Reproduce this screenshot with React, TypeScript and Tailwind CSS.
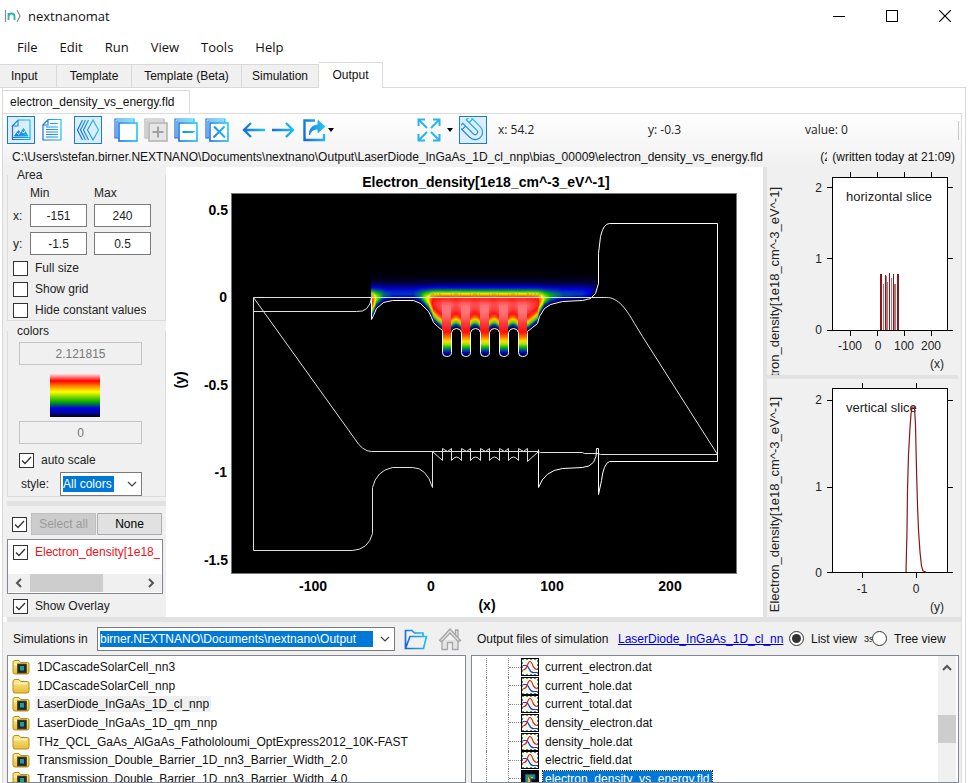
import React from 'react';

const BLUE = 'url(#toolBlue)';

type Point = [number, number];

/* ---------- band diagram ---------- */

const wells: Point[] = [[442, 451], [461, 470], [480, 489], [499, 508], [518, 527]];

const bandLeft: Point[] = [
  [371, 319], [373, 315], [376, 308], [383, 302], [392, 300], [413, 300], [420, 303],
  [428, 311], [431, 317], [433, 322], [437, 326], [442, 330],
];
const bandRight: Point[] = [
  [527, 331], [532, 327], [537, 323], [539, 316], [544, 308], [550, 304], [562, 301],
  [582, 300], [590, 298], [595, 293], [598, 283],
];

const lerpPoints = (pts: Point[], x: number) => {
  for (let i = 1; i < pts.length; i++) {
    const [x0, y0] = pts[i - 1];
    const [x1, y1] = pts[i];
    if (x <= x1) return y0 + ((y1 - y0) * (x - x0)) / (x1 - x0);
  }
  return pts[pts.length - 1][1];
};

const inWell = (x: number) => wells.some(([a, b]) => x >= a && x < b);

const bandEdge = (x: number) => {
  if (x < 442) return lerpPoints(bandLeft, x);
  if (x > 527) return lerpPoints(bandRight, x);
  const well = wells.find(([a, b]) => x >= a && x < b);
  if (well) {
    const t = Math.abs(x + 0.5 - (well[0] + well[1]) / 2);
    return t > 4 ? 353 : 356;
  }
  const left = wells.filter(([, b]) => b <= x).pop();
  const mid = (left ? left[1] : 451) + 5;
  return 328 + Math.pow(Math.abs(x + 0.5 - mid) / 5, 2) * 3;
};

const scale: [number, number, number, number][] = [
  [0, 0, 0, 0], [0.06, 0, 0, 60], [0.2, 0, 0, 235], [0.3, 0, 100, 140], [0.38, 0, 190, 0],
  [0.54, 250, 250, 0], [0.64, 255, 130, 0], [0.74, 250, 10, 10], [0.84, 252, 60, 60],
  [0.93, 255, 135, 140], [1, 255, 185, 185],
];

const colorOf = (v: number) => {
  for (let i = 1; i < scale.length; i++) {
    if (v <= scale[i][0]) {
      const a = scale[i - 1];
      const b = scale[i];
      const t = (v - a[0]) / (b[0] - a[0]);
      return `rgb(${[1, 2, 3].map((k) => Math.round(a[k] + (b[k] - a[k]) * t)).join(',')})`;
    }
  }
  return 'rgb(255,185,185)';
};

const TOP = 267;
const columns = Array.from({ length: 227 }, (_, i) => {
  const x = 371 + i;
  const edge = bandEdge(x);
  const height = edge - TOP;
  const steps = Math.ceil(height / 3);
  const stops = Array.from({ length: steps + 1 }, (_, k) => {
    const y = TOP + (height * k) / steps;
    const fermi = 1 / (1 + Math.exp((293 - y) / 4));
    const filled = 1 - Math.exp(-(edge - y) / (inWell(x) ? 18 : 10));
    return { offset: k / steps, color: colorOf(filled * fermi) };
  });
  return { x, height, stops };
});

const toPath = (pts: Point[]) => 'M' + pts.map((p) => p.join(' ')).join('L');

const wellPath = wells
  .map(([a, b], i) => {
    const arch = i < 4 ? `Q${b + 1} 328 ${b + 5} 328Q${b + 9} 328 ${wells[i + 1][0]} 332` : '';
    return `L${a} 352Q${a} 356 ${a + 4} 356Q${b} 356 ${b} 352L${b} 332${arch}`;
  })
  .join('');

const conduction =
  toPath([[371, 297], ...bandLeft]) + wellPath + 'L' + bandRight.map((p) => p.join(' ')).join('L') +
  'L598 253L600 236Q603 223 609 223L717 223L717 461L609 461Q603 463 601 480L598 494L598 448L596 448' +
  'Q597 466 582 467L562 468Q544 470 538 487L538 449';

const valence =
  'M538 451L527 461' +
  [...wells]
    .reverse()
    .map(([a, b], i) => `L${b} 448L${b - 4} 451L${a} 448L${a} 460${i < 4 ? `Q${a - 5} 453 ${a - 10} 460` : ''}`)
    .join('') +
  'L432 451L432 487Q426 467 412 467L392 467Q376 470 372 487L372 533Q368 549 352 550L253 550L253 297';

const DensityChart: React.FC = () => (
  <svg viewBox="166 167 597 450" className="block w-full h-full" role="img" aria-label="Electron density">
    <rect x="231.500" y="193.500" width="505" height="380" fill="#000" stroke="#777" />
    <defs>
      {columns.map((c) => (
        <linearGradient key={c.x} id={`col${c.x}`} x1="0" y1="0" x2="0" y2="1">
          {c.stops.map((s) => (
            <stop key={s.offset} offset={s.offset} stopColor={s.color} />
          ))}
        </linearGradient>
      ))}
    </defs>
    <g shapeRendering="crispEdges">
      {columns.map((c) => (
        <rect key={c.x} x={c.x} y={TOP} width="1" height={c.height} fill={`url(#col${c.x})`} />
      ))}
    </g>
    <g fill="none" stroke="#e0e0e0" transform="translate(0.5 0.5)">
      <path d={conduction} stroke="#fff" />
      <path d={valence} />
      <path d="M253 311H356Q369 312 371 297" />
      <path d="M253 297H606C618 297 626 309 634 323L642 336L717 454" />
      <path d="M253 297L354 438Q362 451 371 451H538L540 452L582 452L584 453L598 453L600 454H717" />
    </g>
    <g className="font-['Liberation_Sans',sans-serif] font-bold" fontSize="14" fill="#000">
      <text x="486" y="187" textAnchor="middle">Electron_density[1e18_cm^-3_eV^-1]</text>
      <g textAnchor="end">
        <text x="228" y="215">0.5</text>
        <text x="227" y="302">0</text>
        <text x="228" y="390">-0.5</text>
        <text x="227" y="477">-1</text>
        <text x="228" y="565">-1.5</text>
      </g>
      <g textAnchor="middle">
        <text x="313" y="591">-100</text>
        <text x="431" y="591">0</text>
        <text x="552" y="591">100</text>
        <text x="670" y="591">200</text>
        <text x="487" y="610">(x)</text>
        <text transform="translate(185 380) rotate(-90)">(y)</text>
      </g>
    </g>
  </svg>
);

/* ---------- slices ---------- */

const sliceFont = "font-['Liberation_Sans',sans-serif] block w-full";
const sliceLabel = 'Electron_density[1e18_cm^-3_eV^-1]';

const HorizontalSlice: React.FC = () => (
  <svg viewBox="767 167 191 208" className={sliceFont} fontSize="12" fill="#222">
    <rect x="832.500" y="177.500" width="115" height="153" fill="#fff" stroke="#000" />
    <path
      d="M827 187.5h5M827 258.5h5M827 330.5h5M948 187.5h5M948 258.5h5M948 330.5h5M850.5 172v5M877.5 172v5M904.5 172v5M931.5 172v5M850.5 331v5M877.5 331v5M904.5 331v5M931.5 331v5"
      stroke="#000"
    />
    <g textAnchor="end">
      <text x="822" y="192">2</text>
      <text x="822" y="263">1</text>
      <text x="822" y="334">0</text>
    </g>
    <g textAnchor="middle">
      <text x="850" y="350">-100</text>
      <text x="878" y="350">0</text>
      <text x="904" y="350">100</text>
      <text x="931" y="350">200</text>
      <text x="937" y="368">(x)</text>
    </g>
    <g stroke="#8b1518">
      <path d="M880.5 274V330M881.5 274V330M885.5 275V330M889.5 273V330M893.5 274V330M897.5 274V330M898.5 274V330" />
      <path d="M883.5 284V330M887.5 282V330M891.5 278V330M895.5 284V330M886.5 276V330M894.5 284V330" strokeOpacity="0.6" />
    </g>
    <text x="846" y="201" fontSize="13">horizontal slice</text>
    <text transform="translate(779 187) rotate(-90)" textAnchor="end" fontSize="13">{sliceLabel}</text>
  </svg>
);

const VerticalSlice: React.FC = () => (
  <svg viewBox="767 379 191 237" className={sliceFont} fontSize="12" fill="#222">
    <rect x="832.500" y="388.500" width="115" height="184" fill="#fff" stroke="#000" />
    <path
      d="M827 400.5h5M827 487.5h5M827 572.5h5M948 400.5h5M948 487.5h5M948 572.5h5M862.5 383v5M916.5 383v5M862.5 573v5M916.5 573v5"
      stroke="#000"
    />
    <g textAnchor="end">
      <text x="822" y="404">2</text>
      <text x="822" y="491">1</text>
      <text x="822" y="577">0</text>
    </g>
    <g textAnchor="middle">
      <text x="862" y="593">-1</text>
      <text x="916" y="593">0</text>
      <text x="937" y="611">(y)</text>
    </g>
    <text x="846" y="412" fontSize="13">vertical slice</text>
    <path
      d="M906 572L907 530L907.500 490L908.500 455L910 428L911 414L912 407H914.500L915.500 425L916.500 470L917.500 505L918.500 530L920 552L921.500 566L923 571L926 572"
      fill="none"
      stroke="#8b1518"
      strokeWidth="1.2"
    />
    <text transform="translate(779 397) rotate(-90)" textAnchor="end" fontSize="13">{sliceLabel}</text>
  </svg>
);

/* ---------- small controls ---------- */

const Check: React.FC<{ label?: string; name: string; checked?: boolean; className?: string }> = ({ label, name, checked, className }) => (
  <label className={`flex items-center gap-[7px] whitespace-nowrap ${className ?? ''}`}>
    <span className="grid shrink-0">
      <input
        type="checkbox"
        defaultChecked={checked}
        aria-label={label ? undefined : name}
        className="peer col-start-1 row-start-1 appearance-none size-[15px] bg-white border border-[#333]"
      />
      <svg viewBox="0 0 15 15" className="col-start-1 row-start-1 size-[15px] invisible peer-checked:visible pointer-events-none">
        <path d="M3 7.500L6 10.500L12 4" fill="none" stroke="#333" strokeWidth="1.3" />
      </svg>
    </span>
    {label && <span className="min-w-0 overflow-hidden">{label}</span>}
  </label>
);

const Chevron: React.FC<{ d?: string; className?: string }> = ({ d = 'M1 3L5 7L9 3', className }) => (
  <svg viewBox="0 0 10 10" className={`size-[10px] shrink-0 ${className ?? ''}`}>
    <path d={d} fill="none" stroke="#444" strokeWidth="1.2" />
  </svg>
);

const BoldChevron: React.FC<{ d: string; className?: string }> = ({ d, className }) => (
  <svg viewBox="0 0 10 10" className={`size-[10px] shrink-0 ${className ?? ''}`}>
    <path d={d} fill="none" stroke="#555" strokeWidth="2" />
  </svg>
);

const numberBox = 'w-[57px] h-[23px] bg-white border border-[#7a7a7a] text-center text-[#222] outline-none';

/* ---------- toolbar ---------- */

const Separator = () => <span className="w-px h-[19px] bg-[#c8c8c8] shrink-0" />;

const ToolButton: React.FC<{ label: string; active?: boolean; className?: string; children: React.ReactNode }> = ({ label, active, className, children }) => (
  <button
    aria-label={label}
    className={`h-[28px] flex items-center justify-center shrink-0 ${active ? 'w-[28px] border border-[#1a7ad4] bg-[#dceefb]' : 'w-[24px]'} ${className ?? ''}`}
  >
    <svg viewBox="0 0 24 24" className="size-6 shrink-0" fill="none" stroke={BLUE} strokeWidth="1.6">
      {children}
    </svg>
  </button>
);

const stack = 'M4.500 20H1V1H20V4.500M3 20.500V3H20.500';

const Caret = () => (
  <svg viewBox="0 0 6 4" className="w-[6px] h-[4px] shrink-0">
    <path d="M0 0H6L3 4Z" fill="#000" />
  </svg>
);

const Toolbar: React.FC = () => (
  <div className="flex items-center h-[33px] pl-[4px] pr-[2px] border-t border-[#dcdcdc]">
    <ToolButton label="Show chart" active>
      <path d="M3.500 8V21.500H21V2H9L3.500 8H9V2" strokeWidth="1.2" />
      <path d="M3.500 19.500H21" strokeWidth="1" />
      <path d="M5.500 18L9.500 12.500L11.500 15L14.500 10.500L19 18Z" fill={BLUE} strokeWidth="1" />
      <path d="M8 15L9.500 16.500L11 14.500M13 13.500L14.500 15L16 13" stroke="#fff" strokeWidth="1" />
    </ToolButton>
    <ToolButton label="Show text" className="ml-[5px]">
      <path d="M3 7V22H21V1.500H8L3 7H8V1.500M10 5.500H18M6 9H18M6 11.500H18M6 14H18M6 16.500H18M6 19H18" strokeWidth="1.2" />
    </ToolButton>
    <span className="ml-[6px]"><Separator /></span>
    <ToolButton label="Layers" active className="ml-[4px]">
      <path d="M11.500 12L17 2L22.500 12L17 22ZM12.500 2L7.500 12L12.500 22M9.500 2L4.500 12L9.500 22M6.500 2L1.500 12L6.500 22" strokeWidth="1.2" />
    </ToolButton>
    <span className="ml-[6px]"><Separator /></span>
    <ToolButton label="Single overlay" className="ml-[6px]">
      <path d={stack} strokeWidth="1.2" />
      <rect x="5" y="5" width="18" height="18" fill="#fff" />
    </ToolButton>
    <ToolButton label="Add overlay" className="ml-[6px]">
      <path d={stack} stroke="#b4b4b4" strokeWidth="1.2" />
      <rect x="5" y="5" width="18" height="18" fill="#e6e6e6" stroke="#b4b4b4" />
      <path d="M14 8.500V19.500M8.500 14H19.500" stroke="#a0a0a0" strokeWidth="2" />
    </ToolButton>
    <ToolButton label="Remove overlay" className="ml-[6px]">
      <path d={stack} strokeWidth="1.2" />
      <rect x="5" y="5" width="18" height="18" fill="#fff" />
      <path d="M8.500 14H19.500V14.010" strokeWidth="2" />
    </ToolButton>
    <ToolButton label="Clear overlays" className="ml-[7px]">
      <path d={stack} strokeWidth="1.2" />
      <rect x="5" y="5" width="18" height="18" fill="#fff" />
      <path d="M9 8.500L20 19.500M19.500 8.500L8.500 19.500" strokeWidth="2" />
    </ToolButton>
    <span className="ml-[7px]"><Separator /></span>
    <ToolButton label="Back" className="ml-[6px]">
      <path d="M23 12.010H2L23 12M9 5L2 12L9 19" strokeWidth="2.4" />
    </ToolButton>
    <ToolButton label="Forward" className="ml-[5px]">
      <path d="M1 12.010H22L1 12M15 5L22 12L15 19" strokeWidth="2.4" />
    </ToolButton>
    <ToolButton label="Export" className="ml-[7px]">
      <path d="M13 2.500H2.500V22H22V16" strokeWidth="2.400" />
      <path d="M7.500 17C7 10.500 11 7 16 7V2.500L23 8.500L16 14.500V11C12 11 9 12.500 7.500 17Z" fill={BLUE} strokeWidth="1" />
    </ToolButton>
    <span className="ml-[2px]"><Caret /></span>
    <ToolButton label="Zoom to fit" className="ml-[83px]">
      <path d="M1.500 8V1.500H8M16 1.500H22.500V8M22.500 16V22.500H16M8 22.500H1.500V16M2 2L10 10M22 2L14 10M22 22L14 14M2 22L10 14" stroke="#28b4f0" strokeWidth="2" />
    </ToolButton>
    <span className="ml-[6px]"><Caret /></span>
    <ToolButton label="Snap" active className="ml-[6px]">
      <g transform="rotate(-45 12 12)" strokeWidth="1.2" strokeLinejoin="round">
        <path d="M4.500 0V15A7.500 7.500 0 0 0 19.500 15V0H14.500V15A2.500 2.500 0 0 1 9.500 15V0Z" />
        <path d="M4.500 4H9.500M14.500 4H19.500" />
      </g>
    </ToolButton>
    <div className="flex-1 flex items-center ml-[11px] text-[#222] font-['Open_Sans',sans-serif]">
      <span className="w-[150px]">x: 54.2</span>
      <span className="w-[157px]">y: -0.3</span>
      <span>value: 0</span>
    </div>
    <Separator />
  </div>
);

/* ---------- lists ---------- */

const FolderIcon: React.FC<{ marked?: boolean }> = ({ marked }) => (
  <svg viewBox="0 0 18 16" className="w-[18px] h-[16px] shrink-0">
    <path d="M1 3.500Q1 1.500 3 1.500H7L8.500 3.500H15.500Q17 3.500 17 5V13Q17 15 15 15H3Q1 15 1 13Z" fill="url(#folder)" stroke="#b98a1c" />
    <path d="M2 5.500H15" stroke="#fff6c0" strokeWidth="1.4" />
    {marked && (
      <>
        <rect x="5.500" y="5" width="9" height="9" fill="#1b2a38" stroke="#5d4810" strokeWidth="0.800" />
        <rect x="8" y="7" width="4" height="4.500" fill="#2c9a88" />
      </>
    )}
  </svg>
);

const DataIcon = () => (
  <svg viewBox="0 0 18 18" className="size-[18px] shrink-0">
    <rect x="0.500" y="0.500" width="17" height="17" fill="#eefce8" stroke="#000" />
    <path d="M1.500 1.500H16.500V16.500H1.500Z" fill="none" stroke="#000" strokeDasharray="1 3" />
    <path d="M1.500 7.500H5Q7 8 8.500 11.500T13 14.500H16.500" fill="none" stroke="#2233dd" strokeWidth="1.200" />
    <path d="M1.500 12Q4.500 12 6 8.500Q7.500 3.500 9 3.500Q10.500 3.500 12 8Q13.500 11.500 16.500 11.500" fill="none" stroke="#e02020" strokeWidth="1.200" />
  </svg>
);

const FieldIcon = () => (
  <svg viewBox="0 0 18 18" className="size-[18px] shrink-0">
    <rect width="18" height="18" fill="#05080f" />
    <path d="M4.500 14V4.500H14V9H10V14Z" fill="#1d9b5a" stroke="#1c4fb0" />
    <path d="M7 12V7H12V8H9V12Z" fill="#d6c832" />
    <rect x="8" y="7" width="2" height="2" fill="#d8401c" />
  </svg>
);

const simulations = [
  { name: '1DCascadeSolarCell_nn3', marked: true },
  { name: '1DCascadeSolarCell_nnp' },
  { name: 'LaserDiode_InGaAs_1D_cl_nnp', marked: true, current: true },
  { name: 'LaserDiode_InGaAs_1D_qm_nnp', marked: true },
  { name: 'THz_QCL_GaAs_AlGaAs_Fathololoumi_OptExpress2012_10K-FAST' },
  { name: 'Transmission_Double_Barrier_1D_nn3_Barrier_Width_2.0', marked: true },
  { name: 'Transmission_Double_Barrier_1D_nn3_Barrier_Width_4.0', marked: true },
];

const files = [
  'current_electron.dat',
  'current_hole.dat',
  'current_total.dat',
  'density_electron.dat',
  'density_hole.dat',
  'electric_field.dat',
  'electron_density_vs_energy.fld',
];

const tabs = [
  { name: 'Input', width: 'w-[57px]' },
  { name: 'Template', width: 'w-[75px]' },
  { name: 'Template (Beta)', width: 'w-[110px]' },
  { name: 'Simulation', width: 'w-[77px]' },
];

const Radio: React.FC<{ label: string; checked?: boolean }> = ({ label, checked }) => (
  <label className="flex items-center gap-[7px] whitespace-nowrap">
    <span className="grid place-items-center">
      <input
        type="radio"
        name="view"
        defaultChecked={checked}
        className="peer col-start-1 row-start-1 appearance-none size-[15px] rounded-full border border-[#333] bg-white"
      />
      <span className="col-start-1 row-start-1 size-[9px] rounded-full bg-[#333] invisible peer-checked:visible pointer-events-none" />
    </span>
    {label}
  </label>
);

const App: React.FC = () => {
  return (
    <div className="w-full h-screen overflow-hidden flex flex-col bg-white font-['Liberation_Sans',sans-serif] text-[12px] leading-4 text-[#111]">
      <svg className="absolute size-0" aria-hidden="true">
        <defs>
          <linearGradient id="toolBlue" gradientUnits="userSpaceOnUse" x1="0" y1="14" x2="24" y2="8">
            <stop offset="0" stopColor="#1866dc" />
            <stop offset="1" stopColor="#22cdf2" />
          </linearGradient>
          <linearGradient id="folder" x1="0" y1="0" x2="0" y2="1">
            <stop offset="0" stopColor="#fdeb8c" />
            <stop offset="1" stopColor="#e9bb3a" />
          </linearGradient>
        </defs>
      </svg>

      {/* Title bar */}
      <header className="flex items-center h-8 pl-[4px] font-['Open_Sans',sans-serif] text-[13px]">
        <svg viewBox="0 0 18 16" className="w-[18px] h-[16px]" fill="none">
          <path d="M1.500 2V14M13 2L16 8L13 14" stroke="#8a8a8a" strokeWidth="1.2" />
          <path d="M4.500 12V5M4.500 8Q5 5.500 7.500 5.500T10.500 8V12" stroke="#2bb3ac" strokeWidth="1.8" />
        </svg>
        <h1 className="ml-[6px] flex-1">nextnanomat</h1>
        <div className="flex items-center gap-[41px] pr-[17px]">
          <button aria-label="Minimize"><svg viewBox="0 0 12 12" className="size-3"><path d="M0 6.500H12" stroke="#000" /></svg></button>
          <button aria-label="Maximize"><svg viewBox="0 0 12 12" className="size-3"><rect x="0.500" y="0.500" width="11" height="11" fill="none" stroke="#000" /></svg></button>
          <button aria-label="Close"><svg viewBox="0 0 12 12" className="size-3"><path d="M0 0L12 12M12 0L0 12" stroke="#000" strokeWidth="1.2" /></svg></button>
        </div>
      </header>

      {/* Menu */}
      <nav className="flex items-center h-[30px] pl-[17px] gap-[22px] font-['Open_Sans',sans-serif] text-[13px]">
        <button>File</button>
        <button>Edit</button>
        <button>Run</button>
        <button>View</button>
        <button>Tools</button>
        <button>Help</button>
      </nav>

      {/* Main tabs */}
      <div role="tablist" className="flex items-end h-[26px] shrink-0">
        {tabs.map((t) => (
          <button
            key={t.name}
            role="tab"
            className={`${t.width} h-6 bg-[#f0f0f0] border border-l-0 border-[#d9d9d9] ${t.name === 'Input' ? 'text-left pl-[11px]' : ''}`}
          >
            {t.name}
          </button>
        ))}
        <button role="tab" aria-selected="true" className="w-[64px] h-[26px] pb-[2px] bg-white border border-b-0 border-l-0 border-[#d9d9d9]">Output</button>
        <div className="flex-1 border-b border-[#d9d9d9] mr-[2px]" />
      </div>

      <div className="flex-1 min-h-0 flex flex-col ml-[2px] mr-[2px] pr-[3px] border-x border-[#d9d9d9]">
        <div className="flex items-end h-[25px] shrink-0">
          <button role="tab" aria-selected="true" className="w-[187px] h-[23px] pl-[7px] text-left border border-l-0 border-b-0 border-[#dcdcdc]">
            electron_density_vs_energy.fld
          </button>
        </div>

        <div className="flex-1 min-h-0 flex flex-col border-r border-[#dcdcdc]">
          <div className="bg-gradient-to-b from-white to-[#f0f0f0] shrink-0">
            <Toolbar />
            <div className="flex items-center h-[21px] pl-[9px] pr-[6px] whitespace-nowrap">
              <span>C:\Users\stefan.birner.NEXTNANO\Documents\nextnano\Output\LaserDiode_InGaAs_1D_cl_nnp\bias_00009\electron_density_vs_energy.fld</span>
              <span className="ml-auto w-[7px] overflow-hidden">(2</span>
              <span className="ml-[5px]">(written today at 21:09)</span>
            </div>
          </div>

          <div className="flex h-[450px] shrink-0 bg-white">
            {/* Left panel */}
            <aside className="w-[163px] shrink-0 pl-[4px] bg-[#f0f0f0] text-[#222] flex flex-col">
              <fieldset className="h-[154px] border border-t-0 border-[#dcdcdc] px-[5px]">
                <legend className="px-[4px] h-4 leading-4">Area</legend>
                <div className="grid grid-cols-[17px_64px_57px] gap-y-[5px] items-center">
                  <span />
                  <span className="h-4 leading-5">Min</span>
                  <span className="h-4 leading-5">Max</span>
                  <label htmlFor="xmin">x:</label>
                  <input id="xmin" className={numberBox} defaultValue="-151" />
                  <input aria-label="x max" className={numberBox} defaultValue="240" />
                  <label htmlFor="ymin">y:</label>
                  <input id="ymin" className={numberBox} defaultValue="-1.5" />
                  <input aria-label="y max" className={numberBox} defaultValue="0.5" />
                </div>
                <div className="flex flex-col gap-[5px] mt-[5px]">
                  <Check name="full" label="Full size" />
                  <Check name="grid" label="Show grid" />
                  <Check name="hide" label="Hide constant values" />
                </div>
              </fieldset>
              <fieldset className="h-[174px] border border-t-0 border-[#dcdcdc] pl-[11px] mt-[2px]">
                <legend className="px-[1px] h-4 leading-4 -ml-[3px]">colors</legend>
                <input aria-label="maximum" disabled defaultValue="2.121815" className="block w-[123px] h-[23px] mt-[3px] border border-[#c4c4c4] text-center text-[#777]" />
                <div className="w-[50px] h-[44px] mt-[8px] mb-[4px] ml-[31px] bg-[linear-gradient(to_bottom,#fff_0%,#f00_18%,#f80_30%,#ff0_43%,#0a0_66%,#00d_80%,#00a_90%,#000_100%)]" />
                <input aria-label="minimum" disabled defaultValue="0" className="block w-[123px] h-[23px] border border-[#c4c4c4] text-center text-[#777]" />
                <Check name="auto" label="auto scale" checked className="mt-[8px]" />
                <div className="flex items-center mt-[4px]">
                  <label htmlFor="style" className="w-[41px] pl-[2px]">style:</label>
                  <div className="flex items-center w-[82px] h-[24px] pl-[2px] pr-[4px] bg-white border border-[#7a7a7a] justify-between">
                    <select id="style" className="appearance-none bg-[#0078d7] text-white w-[51px] outline-none">
                      <option>All colors</option>
                    </select>
                    <Chevron />
                  </div>
                </div>
              </fieldset>
              <div className="h-[5px] mt-[4px] bg-[#e2e2e2]" />
              <div className="flex items-center h-[22px] mt-[7px] pl-[5px]">
                <Check name="all plots" checked />
                <button disabled className="ml-[4px] w-[65px] h-[22px] bg-[#ccc] border border-[#bfbfbf] text-[#9a9a9a]">Select all</button>
                <button className="w-[65px] ml-[1px] h-[22px] bg-[#e1e1e1] border border-[#adadad] text-black">None</button>
              </div>
              <div className="h-[55px] w-[156px] mt-[4px] shrink-0 bg-white border border-[#828790] overflow-hidden flex flex-col justify-between pb-px">
                <Check name="density" label="Electron_density[1e18_" checked className="pl-[5px] pt-[4px] text-[#f01020]" />
                <div className="flex items-center h-[18px] bg-[#f0f0f0]">
                  <BoldChevron d="M7 1L3 5L7 9" className="mx-[6px]" />
                  <div className="w-[73px] h-full bg-[#cdcdcd]" />
                  <BoldChevron d="M3 1L7 5L3 9" className="ml-auto mr-[6px]" />
                </div>
              </div>
              <Check name="overlay" label="Show Overlay" checked className="pl-[6px] mt-[4px]" />
            </aside>

            {/* Density map */}
            <main className="flex-1 min-w-0 bg-white">
              <DensityChart />
            </main>

            {/* Slices */}
            <aside className="w-[198px] shrink-0 pr-[3px] bg-[#f0f0f0] border-l-4 border-[#e2e2e2]">
              <HorizontalSlice />
              <div className="h-[4px] bg-[#e2e2e2]" />
              <VerticalSlice />
            </aside>
          </div>

          <div className="h-[5px] shrink-0 ml-[4px] bg-[#e2e2e2]" />

          {/* Simulations and output files */}
          <div className="flex-1 min-h-0 flex gap-[5px] pl-[4px] pr-[2px] bg-[#f0f0f0]">
            <section className="w-[459px] min-h-0 flex flex-col">
              <div className="flex items-center h-[33px] shrink-0 pl-[6px]">
                <label htmlFor="folder-path" className="w-[84px]">Simulations in</label>
                <div className="flex items-center w-[298px] h-[24px] bg-white border border-[#7a7a7a] pl-[2px] pr-[4px] justify-between">
                  <select id="folder-path" className="appearance-none w-[273px] bg-[#0078d7] text-white outline-none">
                    <option>birner.NEXTNANO\Documents\nextnano\Output</option>
                  </select>
                  <Chevron />
                </div>
                <button aria-label="Open folder" className="ml-[9px]">
                  <svg viewBox="0 0 24 22" className="w-6 h-[22px]" fill="none" stroke={BLUE} strokeWidth="1.7">
                    <path d="M1.500 20.500V2.500H8L10.500 5H19V8.500M1.500 20.500L6 8.500H22.500L19.500 20.500Z" />
                  </svg>
                </button>
                <button aria-label="Home" className="ml-[10px]">
                  <svg viewBox="0 0 24 24" className="size-6" fill="#e4e4e4" stroke="#a6a6a6" strokeWidth="1.3">
                    <path d="M4 13V22.500H9.500V15.500H14.500V22.500H20V13M1.500 13.500L12 2L22.500 13.500L20.500 15L12 6L3.500 15ZM17.500 7.500V3H20V10" />
                  </svg>
                </button>
              </div>
              <ul className="flex-1 min-h-0 overflow-hidden bg-white border border-[#828790] pt-[2px] pl-[4px]">
                <div className="grid grid-rows-7 h-[130px]">
                  {simulations.map((s) => (
                    <li key={s.name} className="flex items-center gap-[5px] whitespace-nowrap">
                      <FolderIcon marked={s.marked} />
                      <span className={`px-[2px] ${s.current ? 'bg-[#f0f0f0]' : ''}`}>{s.name}</span>
                    </li>
                  ))}
                </div>
              </ul>
            </section>

            <section className="flex-1 min-w-0 min-h-0 flex flex-col">
              <div className="flex items-center h-[33px] shrink-0 pl-[6px] whitespace-nowrap">
                <span className="w-[141px]">Output files of simulation</span>
                <a href="#simulation" className="w-[171px] overflow-hidden text-[#0000e0] underline">LaserDiode_InGaAs_1D_cl_nn</a>
                <Radio label="List view" checked />
                <span className="w-[8px] ml-[7px] overflow-hidden text-[9px]">3s</span>
                <Radio label="Tree view" />
              </div>
              <div className="flex-1 min-h-0 flex bg-white border border-[#828790] overflow-hidden">
                <ul className="flex-1 min-w-0 pt-[2px]">
                  <div className="grid grid-rows-7 h-[130px]">
                    {files.map((f, i) => {
                      const current = i === files.length - 1;
                      return (
                        <li key={f} className="flex items-center whitespace-nowrap">
                          <span className="ml-[14px] w-[22px] self-stretch border-l border-dotted border-[#888]" />
                          <span className="w-[13px] self-stretch border-l border-dotted border-[#888] flex items-center">
                            <span className="w-full border-t border-dotted border-[#888]" />
                          </span>
                          {current ? <FieldIcon /> : <DataIcon />}
                          <span className={`ml-[4px] px-[2px] ${current ? 'bg-[#0078d7] text-white outline outline-dotted outline-[#222]' : ''}`}>{f}</span>
                        </li>
                      );
                    })}
                  </div>
                </ul>
                <div className="w-[18px] mr-[2px] bg-[#f0f0f0]">
                  <BoldChevron d="M1 7L5 3L9 7" className="mx-[4px] mt-[7px]" />
                  <div className="h-[28px] mt-[42px] bg-[#cdcdcd]" />
                </div>
              </div>
            </section>
          </div>
        </div>
      </div>
    </div>
  );
};

export default App;
